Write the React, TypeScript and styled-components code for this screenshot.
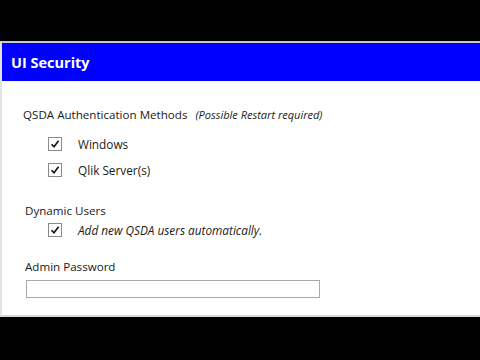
import React from "react";
import styled, { createGlobalStyle } from "styled-components";

const GlobalStyle = createGlobalStyle`
  html, body {
    margin: 0;
    padding: 0;
    background: #000;
    width: 480px;
    height: 360px;
    overflow: hidden;
  }
`;

const Screen = styled.div`
  width: 480px;
  height: 360px;
  background: #000;
  padding-top: 41px;
  box-sizing: border-box;
  font-family: "Open Sans", "Noto Sans", sans-serif;
`;

const Dialog = styled.div`
  border-top: 2px solid #c8c8d0;
  border-bottom: 2px solid #d8d8d8;
  border-left: 2px solid #e2e2e2;
  background: #fff;
`;

const Header = styled.div`
  height: 38px;
  background: #0000fe;
  color: #fff;
  font-size: 14.5px;
  font-weight: 700;
  display: flex;
  align-items: center;
  padding-left: 9px;
`;

const Body = styled.div`
  height: 234px;
  padding: 26px 0 0 21px;
  box-sizing: border-box;
  color: #1a1a1a;
`;

const SectionTitle = styled.div<{ $indent?: number }>`
  font-size: 11.6px;
  display: flex;
  align-items: baseline;
  gap: 8px;
  padding-left: ${(p) => p.$indent ?? 0}px;
  height: 18px;
`;

const Note = styled.span`
  font-size: 11px;
  font-style: italic;
`;

const Options = styled.div<{ $gap: number; $top: number }>`
  display: flex;
  flex-direction: column;
  gap: ${(p) => p.$gap}px;
  padding: ${(p) => p.$top}px 0 0 25px;
`;

const Option = styled.label<{ $italic?: boolean }>`
  display: flex;
  align-items: center;
  gap: 16px;
  font-size: 11.8px;
  font-style: ${(p) => (p.$italic ? "italic" : "normal")};
  height: 14px;
`;

const Box = styled.span`
  width: 12px;
  height: 12px;
  border: 1px solid #8a8a8a;
  display: flex;
  align-items: center;
  justify-content: center;
  background: #fff;
`;

const Group = styled.div<{ $top: number }>`
  margin-top: ${(p) => p.$top}px;
`;

const Input = styled.div`
  width: 292px;
  height: 16px;
  margin: 3px 0 0 3px;
  border: 1px solid #a8a8a8;
  background: #fff;
`;

const Check = () => (
  <Box>
    <svg width="10" height="10" viewBox="0 0 10 10">
      <path d="M1.5 5.2 L4 7.8 L8.6 1.8" fill="none" stroke="#111" strokeWidth="1.6" />
    </svg>
  </Box>
);

export default function App() {
  return (
    <>
      <GlobalStyle />
      <Screen>
        <Dialog>
          <Header>UI Security</Header>
          <Body>
            <SectionTitle>
              QSDA Authentication Methods <Note>(Possible Restart required)</Note>
            </SectionTitle>
            <Options $gap={12} $top={12}>
              <Option>
                <Check />
                Windows
              </Option>
              <Option>
                <Check />
                Qlik Server(s)
              </Option>
            </Options>
            <Group $top={26}>
              <SectionTitle $indent={2}>Dynamic Users</SectionTitle>
              <Options $gap={0} $top={2}>
                <Option $italic>
                  <Check />
                  Add new QSDA users automatically.
                </Option>
              </Options>
            </Group>
            <Group $top={22}>
              <SectionTitle $indent={2}>Admin Password</SectionTitle>
              <Input />
            </Group>
          </Body>
        </Dialog>
      </Screen>
    </>
  );
}
